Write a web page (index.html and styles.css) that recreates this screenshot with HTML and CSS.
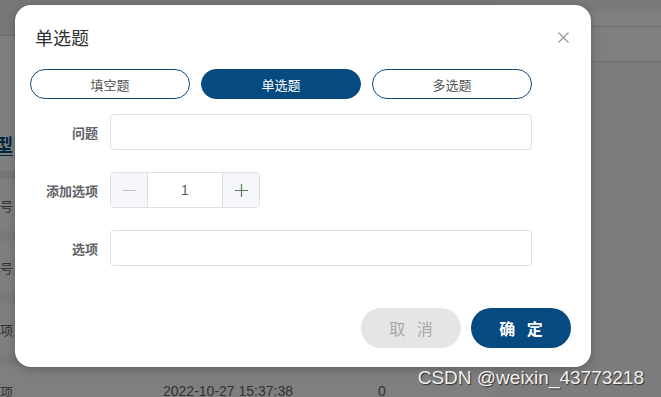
FILE: index.html
```html
<!DOCTYPE html>
<html lang="zh-CN">
<head>
    <meta charset="UTF-8">
    <meta name="viewport" content="width=device-width, initial-scale=1.0">
    <title>单选题</title>
    <link rel="stylesheet" href="styles.css">
</head>
<body>
    <div class="page">
        <div class="main-col">
            <div class="topbar"></div>
            <div class="table">
                <div class="table-head">
                    <div class="cell-side"><span class="head-text">题型</span></div>
                </div>
                <div class="table-row">
                    <div class="cell-side">序号</div>
                </div>
                <div class="table-row">
                    <div class="cell-side">序号</div>
                </div>
                <div class="table-row">
                    <div class="cell-side">选项</div>
                </div>
                <div class="table-row">
                    <div class="cell-side">选项</div>
                    <div class="cell-date">2022-10-27 15:37:38</div>
                    <div class="cell-num">0</div>
                </div>
            </div>
        </div>
        <div class="side-col">
            <div class="side-strip"></div>
            <div class="side-bar"></div>
            <div class="side-row"></div>
            <div class="side-rest"></div>
        </div>
    </div>

    <div class="mask"></div>

    <div class="dialog">
        <div class="dialog-header">
            <span class="dialog-title">单选题</span>
            <button class="dialog-close">
                <svg width="11" height="11" viewBox="0 0 11 11">
                    <path d="M0.5 0.5L10.5 10.5M10.5 0.5L0.5 10.5" stroke="#909399" stroke-width="1.1" fill="none"/>
                </svg>
            </button>
        </div>

        <div class="tabs">
            <button class="tab">填空题</button>
            <button class="tab active">单选题</button>
            <button class="tab">多选题</button>
        </div>

        <div class="form">
            <div class="form-row">
                <label class="form-label">问题</label>
                <input class="text-input" type="text">
            </div>
            <div class="form-row">
                <label class="form-label">添加选项</label>
                <div class="counter">
                    <span class="counter-btn minus">
                        <svg width="13" height="13" viewBox="0 0 13 13"><path d="M0 6.5H13" stroke="#c0c4cc" stroke-width="1.2"/></svg>
                    </span>
                    <span class="counter-value">1</span>
                    <span class="counter-btn plus">
                        <svg width="13" height="13" viewBox="0 0 13 13"><path d="M0 6.5H13M6.5 0V13" stroke="#5a7a5a" stroke-width="1.2"/></svg>
                    </span>
                </div>
            </div>
            <div class="form-row">
                <label class="form-label">选项</label>
                <input class="text-input" type="text">
            </div>
        </div>

        <div class="dialog-footer">
            <button class="btn btn-cancel">取 消</button>
            <button class="btn btn-ok">确 定</button>
        </div>
    </div>

    <div class="watermark">CSDN @weixin_43773218</div>
</body>
</html>
```

FILE: styles.css
```css
body {
    margin: 0;
    width: 661px;
    height: 397px;
    overflow: hidden;
    font-family: "Noto Sans CJK SC", "Liberation Sans", sans-serif;
    background-color: #ffffff;
    position: relative;
}
.page {
    display: flex;
    height: 397px;
}
.main-col {
    width: 495px;
    display: flex;
    flex-direction: column;
}
.topbar {
    flex-shrink: 0;
    height: 35px;
    background-color: #eeeeee;
    border-bottom: 1px solid #dddddd;
}
.table {
    flex-shrink: 0;
    padding-top: 82px;
}
.table-head {
    height: 53px;
    display: flex;
    align-items: center;
    border-bottom: 8px solid #eeeeee;
}
.table-row {
    height: 52px;
    display: flex;
    align-items: center;
    border-bottom: 10px solid #f2f2f2;
    font-size: 14px;
    color: #666666;
}
.cell-side {
    width: 13px;
    display: flex;
    justify-content: flex-end;
    white-space: nowrap;
    font-size: 13px;
    color: #666666;
}
.head-text {
    font-size: 18px;
    font-weight: bold;
    color: #054a80;
    border-bottom: 1px solid #054a80;
    line-height: 22px;
}
.cell-date {
    margin-left: 150px;
    font-family: "Liberation Sans", Arial, sans-serif;
    font-size: 14px;
    line-height: 16px;
}
.cell-num {
    margin-left: 85px;
    font-family: "Liberation Sans", Arial, sans-serif;
    font-size: 14px;
    line-height: 16px;
}
.side-col {
    flex: 1;
    display: flex;
    flex-direction: column;
}
.side-strip {
    height: 11px;
    background-color: #f4f4f4;
}
.side-bar {
    height: 15px;
    background-color: #fefefe;
    border-bottom: 1px solid #dcdcdc;
}
.side-row {
    height: 34px;
    background-color: #ffffff;
    border-bottom: 1px solid #dcdcdc;
}
.side-rest {
    flex: 1;
    background-color: #f8f8f8;
}

.mask {
    position: absolute;
    top: 0;
    left: 0;
    width: 100%;
    height: 100%;
    background-color: rgba(0, 0, 0, 0.5);
}

.dialog {
    position: absolute;
    left: 15px;
    top: 5px;
    width: 576px;
    height: 362px;
    box-sizing: border-box;
    background-color: #ffffff;
    border-radius: 16px;
    box-shadow: 0 2px 10px rgba(0, 0, 0, 0.25);
    display: flex;
    flex-direction: column;
}
.dialog-header {
    display: flex;
    justify-content: space-between;
    align-items: center;
    padding: 20px 22px 0 20px;
    height: 24px;
}
.dialog-title {
    font-size: 18px;
    line-height: 24px;
    color: #303133;
}
.dialog-close {
    background: none;
    border: none;
    padding: 0;
    width: 11px;
    height: 11px;
    display: flex;
}
.tabs {
    display: flex;
    gap: 11px;
    padding-left: 15px;
    margin-top: 20px;
}
.tab {
    width: 160px;
    height: 30px;
    box-sizing: border-box;
    border: 1.5px solid #0d4c80;
    border-radius: 15px;
    background-color: #ffffff;
    font-family: "Noto Sans CJK SC", sans-serif;
    font-size: 13px;
    color: #555555;
    padding: 0;
}
.tab.active {
    background-color: #054a80;
    color: #ffffff;
}
.form {
    display: flex;
    flex-direction: column;
    gap: 22px;
    margin-top: 15px;
}
.form-row {
    display: flex;
    align-items: center;
}
.form-label {
    width: 68px;
    padding-left: 15px;
    padding-right: 12px;
    text-align: right;
    font-size: 13px;
    font-weight: bold;
    color: #606266;
    white-space: nowrap;
}
.text-input {
    width: 422px;
    height: 36px;
    box-sizing: border-box;
    border: 1px solid #dcdfe6;
    border-radius: 4px;
    margin: 0;
    outline: none;
}
.counter {
    display: flex;
    width: 150px;
    height: 36px;
    box-sizing: border-box;
    border: 1px solid #dcdfe6;
    border-radius: 4px;
    overflow: hidden;
}
.counter-btn {
    width: 36px;
    display: flex;
    align-items: center;
    justify-content: center;
    background-color: #f5f7fa;
}
.counter-btn.minus {
    border-right: 1px solid #dcdfe6;
}
.counter-btn.plus {
    border-left: 1px solid #dcdfe6;
}
.counter-value {
    flex: 1;
    display: flex;
    align-items: center;
    justify-content: center;
    font-family: "Liberation Sans", Arial, sans-serif;
    font-size: 14px;
    color: #606266;
}
.dialog-footer {
    display: flex;
    justify-content: flex-end;
    gap: 10px;
    padding: 0 20px;
    margin-top: 42px;
}
.btn {
    width: 100px;
    height: 40px;
    border: none;
    border-radius: 20px;
    font-family: "Noto Sans CJK SC", sans-serif;
    font-size: 16px;
    letter-spacing: 4px;
    padding: 0 0 0 4px;
}
.btn-cancel {
    background-color: #e5e5e5;
    color: #a8a8a8;
}
.btn-ok {
    background-color: #054a80;
    color: #ffffff;
    font-weight: bold;
}
.watermark {
    position: absolute;
    right: 17px;
    bottom: 9px;
    font-family: "Liberation Sans", Arial, sans-serif;
    font-size: 19px;
    line-height: 20px;
    color: #f0f0f0;
    text-shadow: 1px 1px 1px rgba(0, 0, 0, 0.6);
}
```
